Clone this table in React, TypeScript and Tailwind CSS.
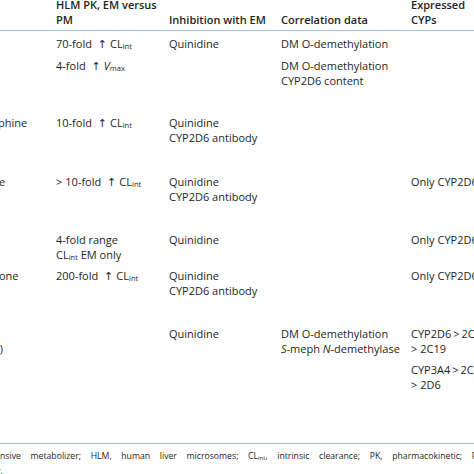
const Sub = ({ children }: { children: React.ReactNode }) => (
  <sub className="text-[7.5px] relative top-[1px] align-baseline">{children}</sub>
);

const CLint = () => (
  <>
    CL<Sub>int</Sub>
  </>
);

const Up = () => (
  <span className="mx-[3px] text-[11px]" style={{ fontFamily: "'DejaVu Sans', sans-serif" }}>
    ↑
  </span>
);
const Gt = ({ tight }: { tight?: boolean }) => (
  <span className={tight ? "mx-[2px]" : "mr-[3px]"}>&gt;</span>
);

type Row = {
  h: string;
  c1?: React.ReactNode;
  c2?: React.ReactNode;
  c3?: React.ReactNode;
  c4?: React.ReactNode;
  c5?: React.ReactNode;
};

const rows: Row[] = [
  {
    h: "h-[22px]",
    c2: (
      <>
        70-fold <Up />
        <CLint />
      </>
    ),
    c3: "Quinidine",
    c4: "DM O-demethylation",
  },
  {
    h: "h-[57px]",
    c2: (
      <>
        4-fold <Up />
        <i>V</i>
        <Sub>max</Sub>
      </>
    ),
    c4: (
      <>
        DM O-demethylation
        <br />
        CYP2D6 content
      </>
    ),
  },
  {
    h: "h-[59px]",
    c1: <span className="-ml-[2px]">phine</span>,
    c2: (
      <>
        10-fold <Up />
        <CLint />
      </>
    ),
    c3: (
      <>
        Quinidine
        <br />
        CYP2D6 antibody
      </>
    ),
  },
  {
    h: "h-[58px]",
    c1: <span className="-ml-[1px]">e</span>,
    c2: (
      <>
        <Gt />
        10-fold <Up />
        <CLint />
      </>
    ),
    c3: (
      <>
        Quinidine
        <br />
        CYP2D6 antibody
      </>
    ),
    c5: "Only CYP2D6",
  },
  {
    h: "h-[36px]",
    c2: (
      <>
        4-fold range
        <br />
        <CLint /> EM only
      </>
    ),
    c3: "Quinidine",
    c5: "Only CYP2D6",
  },
  {
    h: "h-[58px]",
    c1: <span className="-ml-[1px]">one</span>,
    c2: (
      <>
        200-fold <Up />
        <CLint />
      </>
    ),
    c3: (
      <>
        Quinidine
        <br />
        CYP2D6 antibody
      </>
    ),
    c5: "Only CYP2D6",
  },
  {
    h: "h-[36px]",
    c1: (
      <>
        <br />
        <span className="-ml-[3px]">l)</span>
      </>
    ),
    c3: "Quinidine",
    c4: (
      <>
        DM O-demethylation
        <br />
        <i>S</i>-meph <i>N</i>-demethylase
      </>
    ),
    c5: (
      <>
        CYP2D6
        <Gt tight />
        2C9
        <br />
        <Gt />
        2C19
      </>
    ),
  },
  {
    h: "h-[80px]",
    c5: (
      <>
        CYP3A4
        <Gt tight />
        2C19
        <br />
        <Gt />
        2D6
      </>
    ),
  },
];

const cols = "grid grid-cols-[56px_113px_112px_130px_1fr]";

const foot = [
  "nsive",
  "metabolizer;",
  "HLM,",
  "human",
  "liver",
  "microsomes;",
  "CLint,",
  "intrinsic",
  "clearance;",
  "PK,",
  "pharmacokinetic;",
  "P",
];

export default function App() {
  return (
    <div
      className="w-[474px] h-[474px] overflow-hidden bg-white text-[#231f20] text-[11px] leading-[14.5px] whitespace-nowrap"
      style={{ fontFamily: "'Open Sans', 'Noto Sans', sans-serif" }}
    >
      <div className={`${cols} -mt-[2px] pb-[3px] font-semibold border-b border-[#9ec3de]`}>
        <div />
        <div>
          HLM PK, EM versus
          <br />
          PM
        </div>
        <div className="flex items-end">Inhibition with EM</div>
        <div className="flex items-end">Correlation data</div>
        <div>
          Expressed
          <br />
          CYPs
        </div>
      </div>
      <div className="pt-[6px] border-b border-[#9ec3de]">
        {rows.map((r, i) => (
          <div key={i} className={`${cols} ${r.h} overflow-hidden`}>
            <div>{r.c1}</div>
            <div>{r.c2}</div>
            <div>{r.c3}</div>
            <div>{r.c4}</div>
            <div className="overflow-hidden">{r.c5}</div>
          </div>
        ))}
      </div>
      <div className="pt-[5px] w-[477px] overflow-hidden text-[8.7px] leading-[15px]">
        <div className="flex justify-between">
          {foot.map((w) =>
            w === "CLint," ? (
              <span key={w}>
                CL<sub className="text-[6px] align-baseline relative top-[1px]">int</sub>,
              </span>
            ) : (
              <span key={w}>{w}</span>
            )
          )}
        </div>
        <div className="-ml-[3px]">r.</div>
      </div>
    </div>
  );
}
